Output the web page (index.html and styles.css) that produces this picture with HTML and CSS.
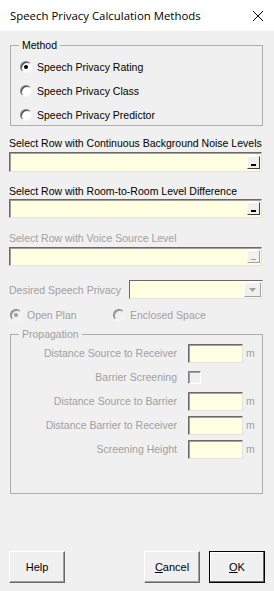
FILE: index.html
```html
<!DOCTYPE html>
<html lang="en">

<head>
  <meta charset="UTF-8">
  <title>Speech Privacy Calculation Methods</title>
  <link rel="stylesheet" href="styles.css">
</head>

<body>
  <div class="window">

    <div class="titlebar">
      <span class="title">Speech Privacy Calculation Methods</span>
      <svg class="close" width="12" height="12" viewBox="0 0 12 12">
        <path d="M1 1 L11 11 M11 1 L1 11" stroke="#000" stroke-width="1" fill="none" />
      </svg>
    </div>

    <div class="content">

      <fieldset class="group method">
        <legend>Method</legend>
        <div class="radio-row"><span class="radio checked"></span>Speech Privacy Rating</div>
        <div class="radio-row"><span class="radio"></span>Speech Privacy Class</div>
        <div class="radio-row"><span class="radio"></span>Speech Privacy Predictor</div>
      </fieldset>

      <div class="field first">
        <div class="label">Select Row with Continuous Background Noise Levels</div>
        <div class="refedit tall"><span class="pick"></span></div>
      </div>

      <div class="field second">
        <div class="label">Select Row with Room-to-Room Level Difference</div>
        <div class="refedit"><span class="pick"></span></div>
      </div>

      <div class="field third disabled">
        <div class="label">Select Row with Voice Source Level</div>
        <div class="refedit"><span class="pick"></span></div>
      </div>

      <div class="desired disabled">
        <span class="desired-label">Desired Speech Privacy</span>
        <div class="combo">
          <span class="arrow">
            <svg width="7" height="4" viewBox="0 0 7 4"><path d="M0 0 H7 L3.5 4 Z" fill="#a0a0a0" /></svg>
          </span>
        </div>
      </div>

      <div class="space-row disabled">
        <div class="radio-row"><span class="radio checked"></span>Open Plan</div>
        <div class="radio-row"><span class="radio"></span>Enclosed Space</div>
      </div>

      <fieldset class="group propagation disabled">
        <legend>Propagation</legend>
        <div class="prop-row"><span class="prop-label">Distance Source to Receiver</span><span class="box"></span><span class="unit">m</span></div>
        <div class="prop-row"><span class="prop-label">Barrier Screening</span><span class="checkbox"></span></div>
        <div class="prop-row"><span class="prop-label">Distance Source to Barrier</span><span class="box"></span><span class="unit">m</span></div>
        <div class="prop-row"><span class="prop-label">Distance Barrier to Receiver</span><span class="box"></span><span class="unit">m</span></div>
        <div class="prop-row"><span class="prop-label">Screening Height</span><span class="box"></span><span class="unit">m</span></div>
      </fieldset>

      <div class="buttons">
        <button class="btn">Help</button>
        <span class="spacer"></span>
        <button class="btn"><u>C</u>ancel</button>
        <button class="btn default"><u>O</u>K</button>
      </div>

    </div>
  </div>
</body>

</html>
```

FILE: styles.css
```css
body {
  margin: 0;
  background: #f0f0f0;
  font-family: "Liberation Sans", Arial, sans-serif;
  font-size: 10.5px;
  color: #000;
}

.window {
  width: 274px;
  height: 591px;
  background: #f0f0f0;
  overflow: hidden;
}

.titlebar {
  height: 31px;
  background: #fff;
  display: flex;
  align-items: center;
  padding: 0 10px;
  box-sizing: border-box;
}

.title {
  font-family: "Open Sans", "Noto Sans", sans-serif;
  font-size: 11.4px;
  flex: 1;
}

.content {
  padding: 0 9px;
}

/* group boxes */
.group {
  border: 1px solid #adadad;
  border-radius: 0;
  margin: 0 2px 0 1px;
  padding: 0;
  box-sizing: border-box;
}

.group legend {
  padding: 0 3px;
  margin-left: 8px;
  line-height: 14px;
}

.method {
  margin-top: 7px;
  height: 88px;
  padding-top: 3px;
}

.method .radio-row {
  padding-left: 9px;
}

.radio-row {
  display: flex;
  align-items: center;
  height: 24px;
}

.radio {
  width: 12px;
  height: 12px;
  border-radius: 50%;
  box-sizing: border-box;
  background: #fff;
  border: 1px solid;
  border-color: #808080 #f8f8f8 #f8f8f8 #808080;
  box-shadow: inset 1px 1px 0 #404040;
  margin-right: 5px;
  position: relative;
}

.radio.checked::after {
  content: "";
  position: absolute;
  left: 3px;
  top: 3px;
  width: 4px;
  height: 4px;
  border-radius: 50%;
  background: #000;
}

.disabled .radio {
  background: #f0f0f0;
  box-shadow: inset 1px 1px 0 #a0a0a0;
}

.disabled .radio.checked::after {
  background: #a0a0a0;
}

/* ref edit fields */
.label {
  height: 14px;
  line-height: 14px;
  white-space: nowrap;
}

.field.first {
  margin-top: 10px;
}

.field.second {
  margin-top: 12px;
}

.field.second .label {
  height: 15px;
}

.field.third {
  margin-top: 13px;
}

.field.first .label,
.field.third .label {
  margin-bottom: 2px;
}

.refedit {
  height: 19px;
  width: 253px;
  box-sizing: border-box;
  background: #ffffe1;
  border: 1px solid;
  border-color: #696969 #e3e3e3 #e3e3e3 #696969;
  box-shadow: inset 1px 1px 0 #a0a0a0;
  display: flex;
  justify-content: flex-end;
  align-items: center;
  padding-right: 1px;
}

.refedit.tall {
  height: 20px;
}

.pick {
  width: 13px;
  height: 13px;
  box-sizing: border-box;
  background: #f0f0f0;
  border: 1px solid;
  border-color: #fff #404040 #404040 #fff;
  display: flex;
  justify-content: center;
  align-items: flex-end;
  padding-bottom: 2px;
}

.pick::after {
  content: "";
  width: 5px;
  height: 2px;
  background: #000;
}

.disabled {
  color: #a0a0a0;
}

.disabled .pick {
  border-color: #fff #a0a0a0 #a0a0a0 #fff;
}

.disabled .pick::after {
  background: #a0a0a0;
  height: 1px;
}

/* desired speech privacy */
.desired {
  display: flex;
  align-items: center;
  margin-top: 14px;
  height: 19px;
}

.desired-label {
  width: 120px;
}

.combo {
  width: 134px;
  height: 19px;
  box-sizing: border-box;
  background: #ffffe1;
  border: 1px solid;
  border-color: #696969 #e3e3e3 #e3e3e3 #696969;
  display: flex;
  justify-content: flex-end;
  padding: 1px;
}

.arrow {
  width: 15px;
  background: #f0f0f0;
  border: 1px solid;
  border-color: #fff #a0a0a0 #a0a0a0 #fff;
  display: flex;
  align-items: center;
  justify-content: center;
}

.space-row {
  display: flex;
  margin-top: 4px;
  padding-left: 1px;
}

.space-row .radio-row:first-child {
  width: 103px;
}

/* propagation */
.propagation {
  height: 167px;
}

.prop-row {
  display: flex;
  align-items: center;
  height: 24px;
}

.prop-label {
  width: 166px;
  text-align: right;
  margin-right: 11px;
}

.box {
  width: 55px;
  height: 19px;
  box-sizing: border-box;
  background: #ffffe1;
  border: 1px solid;
  border-color: #696969 #e3e3e3 #e3e3e3 #696969;
  box-shadow: inset 1px 1px 0 #a0a0a0;
}

.unit {
  margin-left: 3px;
}

.checkbox {
  width: 13px;
  height: 13px;
  box-sizing: border-box;
  border: 1px solid;
  border-color: #808080 #fff #fff #808080;
  box-shadow: inset 1px 1px 0 #a0a0a0;
}

/* buttons */
.buttons {
  display: flex;
  margin-top: 57px;
  gap: 9px;
}

.spacer {
  flex: 1;
}

.btn {
  width: 56px;
  height: 32px;
  font-family: "Liberation Sans", Arial, sans-serif;
  font-size: 11px;
  color: #000;
  background: #f0f0f0;
  border: 1px solid;
  border-color: #fff #696969 #696969 #fff;
  box-shadow: inset -1px -1px 0 #a0a0a0;
  padding: 0;
}

.btn.default {
  border: 1px solid #000;
  box-shadow: inset -1px -1px 0 #696969, inset 1px 1px 0 #fff;
}
```
